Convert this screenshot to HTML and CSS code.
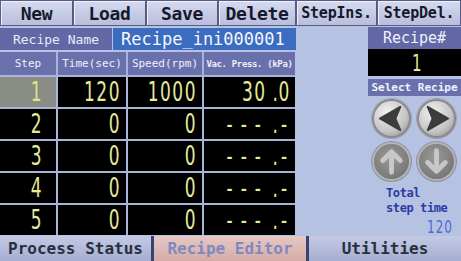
FILE: index.html
```html
<!DOCTYPE html>
<html lang="en">
<head>
  <meta charset="UTF-8">
  <meta name="viewport" content="width=device-width, initial-scale=1.0">
  <title>Recipe Editor</title>
  <link rel="stylesheet" href="styles.css">
</head>
<body>
  <div class="screen">
    <div class="toolbar">
      <button class="tool">New</button>
      <button class="tool">Load</button>
      <button class="tool">Save</button>
      <button class="tool">Delete</button>
      <button class="tool small">StepIns.</button>
      <button class="tool small">StepDel.</button>
    </div>

    <div class="main">
      <div class="editor">
        <div class="name-row">
          <div class="name-label">Recipe Name</div>
          <div class="name-value">Recipe_ini000001</div>
        </div>

        <div class="steps">
          <div class="head">Step</div>
          <div class="head">Time(sec)</div>
          <div class="head">Speed(rpm)</div>
          <div class="head vac-head">Vac. Press. (kPa)</div>

          <!-- step 1 -->
          <div class="cell step current"><span class="seg">1</span></div>
          <div class="cell"><span class="seg">120</span></div>
          <div class="cell"><span class="seg">1000</span></div>
          <div class="cell"><span class="seg"><span class="int">30</span><span class="dp">.</span><span class="dec">0</span></span></div>

          <!-- step 2 -->
          <div class="cell step"><span class="seg">2</span></div>
          <div class="cell"><span class="seg">0</span></div>
          <div class="cell"><span class="seg">0</span></div>
          <div class="cell"><span class="seg"><span class="int dash">---</span><span class="dp">.</span><span class="dec">-</span></span></div>

          <!-- step 3 -->
          <div class="cell step"><span class="seg">3</span></div>
          <div class="cell"><span class="seg">0</span></div>
          <div class="cell"><span class="seg">0</span></div>
          <div class="cell"><span class="seg"><span class="int dash">---</span><span class="dp">.</span><span class="dec">-</span></span></div>

          <!-- step 4 -->
          <div class="cell step"><span class="seg">4</span></div>
          <div class="cell"><span class="seg">0</span></div>
          <div class="cell"><span class="seg">0</span></div>
          <div class="cell"><span class="seg"><span class="int dash">---</span><span class="dp">.</span><span class="dec">-</span></span></div>

          <!-- step 5 -->
          <div class="cell step"><span class="seg">5</span></div>
          <div class="cell"><span class="seg">0</span></div>
          <div class="cell"><span class="seg">0</span></div>
          <div class="cell"><span class="seg"><span class="int dash">---</span><span class="dp">.</span><span class="dec">-</span></span></div>
        </div>
      </div>

      <div class="side">
        <div class="side-head">Recipe#</div>
        <div class="recipe-no"><span class="seg">1</span></div>
        <div class="select-head">Select Recipe</div>

        <div class="nav">
          <button class="round light" title="Previous">
            <svg width="39" height="39" viewBox="0 0 40 40">
              <path d="M8 20 L29 8 L24 20 L29 32 Z" fill="#3c3c3c" stroke="#3c3c3c" stroke-width="2" stroke-linejoin="round"/>
            </svg>
          </button>
          <button class="round light" title="Next">
            <svg width="39" height="39" viewBox="0 0 40 40">
              <path d="M32 20 L11 8 L16 20 L11 32 Z" fill="#3c3c3c" stroke="#3c3c3c" stroke-width="2" stroke-linejoin="round"/>
            </svg>
          </button>
          <button class="round dark" title="Up">
            <svg width="39" height="39" viewBox="0 0 40 40">
              <path d="M20 31 V11 M11 19 L20 10 L29 19" fill="none" stroke="#c8c8c8" stroke-width="5" stroke-linecap="round" stroke-linejoin="round"/>
            </svg>
          </button>
          <button class="round dark" title="Down">
            <svg width="39" height="39" viewBox="0 0 40 40">
              <path d="M20 9 V29 M11 21 L20 30 L29 21" fill="none" stroke="#c8c8c8" stroke-width="5" stroke-linecap="round" stroke-linejoin="round"/>
            </svg>
          </button>
        </div>

        <div class="total">Total<br>step time</div>
        <div class="total-value"><span class="seg">120</span></div>
      </div>
    </div>

    <div class="tabs">
      <div class="tab">Process Status</div>
      <div class="tab active">Recipe Editor</div>
      <div class="tab">Utilities</div>
    </div>
  </div>
</body>
</html>
```

FILE: styles.css
```css
body {
  margin: 0;
  background-color: #b6c2e2;
  font-family: "DejaVu Sans Mono", monospace;
}
.screen {
  width: 461px;
  height: 261px;
  display: flex;
  flex-direction: column;
  overflow: hidden;
}

/* top command buttons */
.toolbar {
  display: grid;
  grid-template-columns: 73px 73px 72px 78px 81px 84px;
  height: 26px;
}
.tool {
  margin: 0;
  padding: 0;
  border: 1px solid #565c84;
  box-shadow: inset 1px 1px 0 #eef0fa;
  background: linear-gradient(#d6daf0, #b8bedc);
  color: #141a2c;
  font-family: "DejaVu Sans Mono", monospace;
  font-size: 18px;
  font-weight: bold;
  letter-spacing: -0.3px;
}
.tool.small {
  font-size: 15px;
  letter-spacing: -0.2px;
}

.main {
  display: grid;
  grid-template-columns: 296px 1fr 93px;
  height: 210px;
}

/* recipe name + steps table */
.editor {
  padding-top: 2px;
}
.name-row {
  display: grid;
  grid-template-columns: 112px 1fr;
  gap: 1px;
  height: 22px;
}
.name-label {
  background-color: #6268a6;
  color: #e8ecf8;
  font-size: 13px;
  display: flex;
  align-items: center;
  justify-content: center;
}
.name-value {
  background-color: #3c6cc0;
  color: #f4f6ff;
  font-size: 17px;
  padding-left: 8px;
  display: flex;
  align-items: center;
}
.steps {
  margin-top: 2px;
  display: grid;
  grid-template-columns: 56px 68px 74px 91px;
  grid-template-rows: 23px repeat(5, 30px);
  gap: 2px;
  width: 295px;
  background-color: #a8b4d8;
}
.head {
  background-color: #6a70ac;
  color: #eef0fa;
  font-size: 11px;
  display: flex;
  align-items: center;
  justify-content: center;
}
.vac-head {
  font-size: 9px;
  font-weight: bold;
  letter-spacing: -0.35px;
}
.cell {
  background-color: #000;
  display: flex;
  align-items: center;
  justify-content: flex-end;
  padding-right: 5px;
}
.cell.step {
  padding-right: 13px;
}
.cell.current {
  background-color: #8a8d86;
}

/* seven segment style numbers */
.seg {
  display: inline-block;
  font-family: "DejaVu Sans", sans-serif;
  font-weight: normal;
  font-size: 17px;
  line-height: 15px;
  letter-spacing: 1.5px;
  color: #e6ea9a;
  transform: scaleY(1.6);
  white-space: pre;
}
.current .seg {
  color: #dce48c;
}
.seg .int {
  display: inline-block;
  width: 40px;
  text-align: right;
}
.seg .dash {
  letter-spacing: 8px;
}
.seg .dp {
  margin-left: 6px;
  letter-spacing: 0;
}
.seg .dec {
  display: inline-block;
  width: 12px;
  text-align: center;
  letter-spacing: 0;
}

/* right hand panel */
.side {
  grid-column: 3;
  display: flex;
  flex-direction: column;
}
.side-head {
  margin-top: 1px;
  height: 22px;
  background-color: #6268a6;
  color: #f0f2fc;
  font-size: 15px;
  display: flex;
  align-items: center;
  justify-content: center;
}
.recipe-no {
  height: 27px;
  background-color: #000;
  display: flex;
  align-items: center;
  justify-content: flex-end;
  padding-right: 38px;
}
.recipe-no .seg {
  font-size: 15px;
  line-height: 14px;
  transform: scaleY(1.5);
}
.select-head {
  margin-top: 3px;
  height: 17px;
  background-color: #6a70ac;
  color: #f0f2fc;
  font-size: 11px;
  font-weight: bold;
  display: flex;
  align-items: center;
  justify-content: center;
}
.nav {
  margin-top: 3px;
  padding-left: 4px;
  display: grid;
  grid-template-columns: 39px 39px;
  gap: 4px 6px;
}
.round {
  width: 39px;
  height: 39px;
  padding: 0;
  border: none;
  border-radius: 50%;
  display: flex;
}
.round.light {
  background: radial-gradient(circle at 40% 35%, #f2f2f2 0%, #c4c4c4 55%, #7c7c7c 100%);
  box-shadow: inset 0 0 0 2px #8a8a8a, 0 0 0 1px #9aa0b8;
}
.round.dark {
  background: radial-gradient(circle at 45% 40%, #9a9a9a 0%, #7c7c7c 60%, #5c5c5c 100%);
  box-shadow: inset 0 0 0 2px #b4b4b4, 0 0 0 1px #8c92ac;
}
.total {
  margin-top: 5px;
  padding-left: 18px;
  color: #2c3ca4;
  font-size: 12px;
  font-weight: bold;
  line-height: 15px;
  letter-spacing: -0.4px;
}
.total-value {
  margin-top: 2px;
  display: flex;
  justify-content: flex-end;
  padding-right: 8px;
  height: 18px;
  align-items: center;
}
.total-value .seg {
  font-size: 12px;
  line-height: 11px;
  letter-spacing: 1px;
  transform: scaleY(1.45);
  color: #4c6cd0;
}

/* bottom screen tabs */
.tabs {
  display: grid;
  grid-template-columns: 151px 152px 152px;
  gap: 3px;
  height: 25px;
  background-color: #3a4070;
}
.tab {
  background: linear-gradient(#c4cae4, #a6aed0);
  color: #263040;
  font-size: 16px;
  font-weight: bold;
  display: flex;
  align-items: center;
  justify-content: center;
}
.tab.active {
  background: linear-gradient(#e6c8c4, #d4aca6);
  color: #8088c0;
}
```
